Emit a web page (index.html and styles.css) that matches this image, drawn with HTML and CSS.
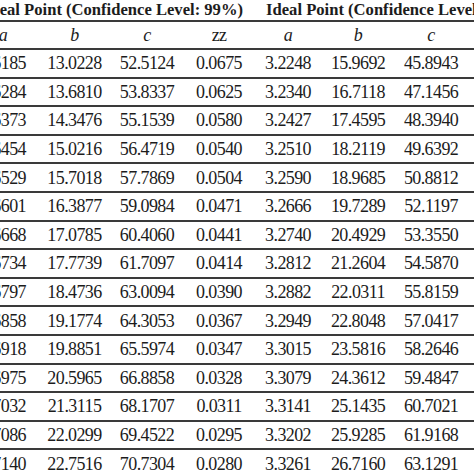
FILE: index.html
```html
<!DOCTYPE html>
<html>
<head>
<meta charset="utf-8">
<link rel="stylesheet" href="styles.css">
</head>
<body>
<div class="frame">
<table class="tbl">
<colgroup>
<col class="c1"><col class="c2"><col class="c3"><col class="c4"><col class="c5"><col class="c6"><col class="c7"><col class="c8">
</colgroup>
<tr class="title">
<th colspan="4" class="t1">Ideal Point (Confidence Level: 99%)</th>
<th colspan="4" class="t2">Ideal Point (Confidence Level: 95%)</th>
</tr>
<tr class="head">
<td><i>a</i></td><td><i>b</i></td><td><i>c</i></td><td>zz</td>
<td><i>a</i></td><td><i>b</i></td><td><i>c</i></td><td>zz</td>
</tr>
<tr><td>3.6185</td><td>13.0228</td><td>52.5124</td><td>0.0675</td><td>3.2248</td><td>15.9692</td><td>45.8943</td><td>0.0825</td></tr>
<tr><td>3.6284</td><td>13.6810</td><td>53.8337</td><td>0.0625</td><td>3.2340</td><td>16.7118</td><td>47.1456</td><td>0.0765</td></tr>
<tr><td>3.6373</td><td>14.3476</td><td>55.1539</td><td>0.0580</td><td>3.2427</td><td>17.4595</td><td>48.3940</td><td>0.0711</td></tr>
<tr><td>3.6454</td><td>15.0216</td><td>56.4719</td><td>0.0540</td><td>3.2510</td><td>18.2119</td><td>49.6392</td><td>0.0662</td></tr>
<tr><td>3.6529</td><td>15.7018</td><td>57.7869</td><td>0.0504</td><td>3.2590</td><td>18.9685</td><td>50.8812</td><td>0.0618</td></tr>
<tr><td>3.6601</td><td>16.3877</td><td>59.0984</td><td>0.0471</td><td>3.2666</td><td>19.7289</td><td>52.1197</td><td>0.0578</td></tr>
<tr><td>3.6668</td><td>17.0785</td><td>60.4060</td><td>0.0441</td><td>3.2740</td><td>20.4929</td><td>53.3550</td><td>0.0542</td></tr>
<tr><td>3.6734</td><td>17.7739</td><td>61.7097</td><td>0.0414</td><td>3.2812</td><td>21.2604</td><td>54.5870</td><td>0.0509</td></tr>
<tr><td>3.6797</td><td>18.4736</td><td>63.0094</td><td>0.0390</td><td>3.2882</td><td>22.0311</td><td>55.8159</td><td>0.0479</td></tr>
<tr><td>3.6858</td><td>19.1774</td><td>64.3053</td><td>0.0367</td><td>3.2949</td><td>22.8048</td><td>57.0417</td><td>0.0452</td></tr>
<tr><td>3.6918</td><td>19.8851</td><td>65.5974</td><td>0.0347</td><td>3.3015</td><td>23.5816</td><td>58.2646</td><td>0.0427</td></tr>
<tr><td>3.6975</td><td>20.5965</td><td>66.8858</td><td>0.0328</td><td>3.3079</td><td>24.3612</td><td>59.4847</td><td>0.0404</td></tr>
<tr><td>3.7032</td><td>21.3115</td><td>68.1707</td><td>0.0311</td><td>3.3141</td><td>25.1435</td><td>60.7021</td><td>0.0383</td></tr>
<tr><td>3.7086</td><td>22.0299</td><td>69.4522</td><td>0.0295</td><td>3.3202</td><td>25.9285</td><td>61.9168</td><td>0.0364</td></tr>
<tr><td>3.7140</td><td>22.7516</td><td>70.7304</td><td>0.0280</td><td>3.3261</td><td>26.7160</td><td>63.1291</td><td>0.0346</td></tr>
</table>
</div>
</body>
</html>
```
FILE: styles.css
```css
html, body {
  margin: 0;
  padding: 0;
  background: #ffffff;
}
.frame {
  width: 474px;
  height: 474px;
  overflow: hidden;
  position: relative;
}
.tbl {
  border-collapse: collapse;
  table-layout: fixed;
  width: 573px;
  margin-left: -33px;
  font-family: "Liberation Serif", "Times New Roman", serif;
  font-size: 18px;
  letter-spacing: -0.6px;
  color: #1c1c1c;
}
.c1 { width: 72px; }
.c2 { width: 71px; }
.c3 { width: 74px; }
.c4 { width: 70px; }
.c5 { width: 68px; }
.c6 { width: 72px; }
.c7 { width: 74px; }
.c8 { width: 72px; }
.tbl td, .tbl th {
  padding: 0;
  text-align: center;
  white-space: nowrap;
  overflow: hidden;
  border-top: 2px solid #3a3a3a;
  height: 26.6px;
  line-height: 26px;
}
.tbl .title th {
  border-top: none;
  height: 20px;
  line-height: 20px;
  font-weight: bold;
  letter-spacing: 0;
  font-size: 16.6px;
  text-align: left;
  overflow: visible;
}
.tbl .title .t1 {
  padding-left: 17px;
}
.tbl .title .t2 {
  padding-left: 12px;
}
.head td {
  height: 25.6px;
}
```
